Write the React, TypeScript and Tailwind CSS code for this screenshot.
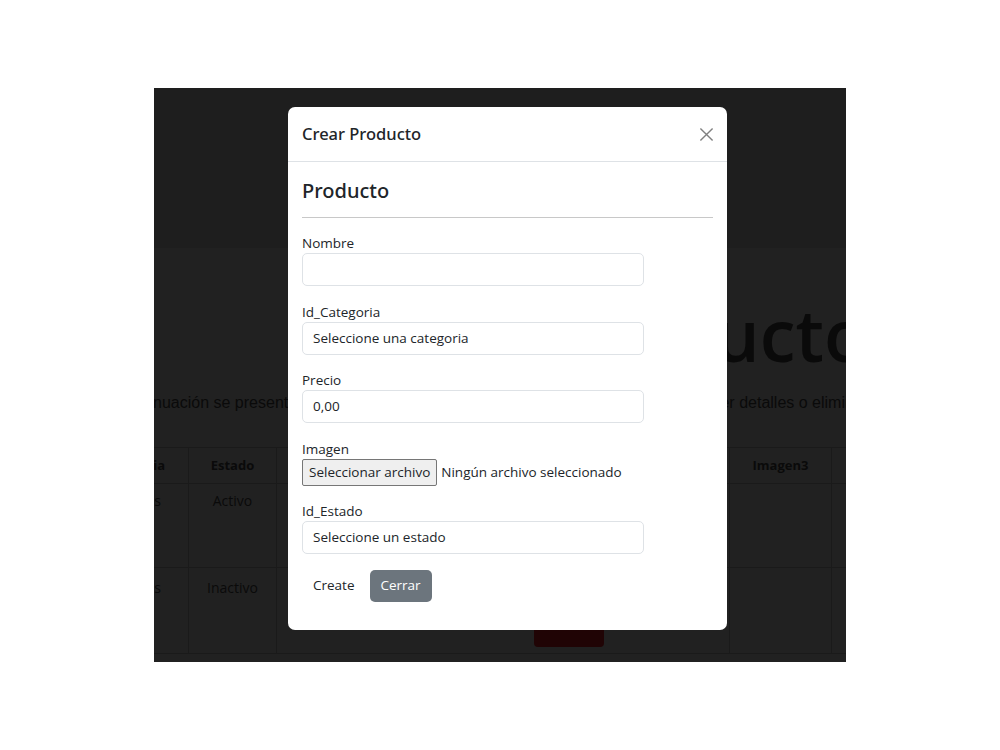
import React from 'react';

const FONT = "font-['Open_Sans',sans-serif]";
const TITLE = "font-['Noto_Sans','Open_Sans',sans-serif] font-medium";

const Field: React.FC<{ label: string; children: React.ReactNode }> = ({ label, children }) => (
    <div className="mb-[15.5px]">
        <label className="block text-[13.5px] leading-[20px] text-[#212529]">{label}</label>
        {children}
    </div>
);

const inputCls =
    'block w-[342px] h-[33px] px-[10px] rounded-[5px] border border-[#dee2e6] bg-white text-[13.5px] text-[#212529] outline-none';

const CreateModal: React.FC = () => (
    <div className={`absolute left-[134px] top-[19px] w-[439px] h-[523px] bg-white rounded-[7px] ${FONT}`}>
        <div className="h-[55px] flex items-center justify-between px-[14px] border-b border-[#dee2e6]">
            <h5 className={`text-[16.5px] text-[#212529] mt-[1px] ${TITLE}`}>Crear Producto</h5>
            <button className="w-[16px] h-[16px] mr-[-1px] flex items-center justify-center text-[#808080]">
                <svg width="15" height="15" viewBox="0 0 16 16" fill="none" stroke="currentColor" strokeWidth="1.5">
                    <path d="M1.5 1.5l13 13M14.5 1.5l-13 13" />
                </svg>
            </button>
        </div>
        <div className="px-[14px] pt-[15px]">
            <h3 className={`text-[20px] leading-[28px] text-[#212529] ${TITLE}`}>Producto</h3>
            <hr className="mt-[12px] mb-[15px] border-t border-[#c8c8c8]" />

            <Field label="Nombre">
                <input className={inputCls} />
            </Field>
            <Field label="Id_Categoria">
                <div className={`${inputCls} flex items-center`}>Seleccione una categoria</div>
            </Field>
            <Field label="Precio">
                <div className={`${inputCls} flex items-center`}>0,00</div>
            </Field>
            <Field label="Imagen">
                <div className="flex items-center h-[27px] text-[13.5px] text-[#212529]">
                    <span className="h-[27px] px-[6px] flex items-center bg-[#efefef] border border-[#767676] rounded-[2px]">
                        Seleccionar archivo
                    </span>
                    <span className="ml-[4px]">Ningún archivo seleccionado</span>
                </div>
            </Field>
            <Field label="Id_Estado">
                <div className={`${inputCls} flex items-center`}>Seleccione un estado</div>
            </Field>

            <div className="flex items-center gap-[4px]">
                <button className="h-[32px] px-[11px] text-[13.5px] text-[#212529]">Create</button>
                <button className="h-[32px] px-[11px] text-[13.5px] text-white bg-[#6c757d] rounded-[5px]">Cerrar</button>
            </div>
        </div>
    </div>
);

const line = 'border-[#1a1a1a]';
const dim = 'text-[#0a0a0a]';

const BackgroundPage: React.FC = () => (
    <div className={`h-full bg-[#212121] ${FONT}`}>
        <div className="h-[160px] bg-[#1e1e1e]" />
        <div className="pt-[50px] h-[122px] whitespace-nowrap">
            <span className={`block ml-[396px] text-[72px] leading-[72px] font-semibold ${dim}`}>Productos</span>
        </div>
        <div className="mt-[21px] h-[24px] flex items-center whitespace-nowrap font-['Liberation_Sans',sans-serif] text-[16px]">
            <span className={`ml-[-49px] w-[571px] shrink-0 ${dim}`}>A continuación se presentan los productos</span>
            <span className={`shrink-0 ${dim}`}>para ver detalles o eliminarlos.</span>
        </div>
        <div className="mt-[32px] ml-[-50px] w-[800px] text-[13px]">
            <div className={`flex h-[37px] items-center border-y ${line} font-bold`}>
                <div className={`w-[85px] h-full border-r ${line} flex items-center justify-end pr-[23px] ${dim}`}>Categoria</div>
                <div className={`w-[88px] h-full border-r ${line} flex items-center justify-center ${dim}`}>Estado</div>
                <div className={`w-[453px] h-full border-r ${line}`} />
                <div className={`w-[102px] h-full border-r ${line} flex items-center justify-center ${dim}`}>Imagen3</div>
            </div>
            <div className={`flex h-[84px] border-b ${line} text-[14px]`}>
                <div className={`w-[85px] border-r ${line} flex justify-end pr-[27px] pt-[6px] ${dim}`}>Accesorios</div>
                <div className={`w-[88px] border-r ${line} flex justify-center pt-[6px] ${dim}`}>Activo</div>
                <div className={`w-[453px] border-r ${line}`} />
                <div className={`w-[102px] border-r ${line}`} />
            </div>
            <div className={`flex h-[86px] border-b ${line} text-[14px]`}>
                <div className={`w-[85px] border-r ${line} flex justify-end pr-[27px] pt-[9px] ${dim}`}>Accesorios</div>
                <div className={`w-[88px] border-r ${line} flex justify-center pt-[9px] ${dim}`}>Inactivo</div>
                <div className={`w-[453px] border-r ${line} flex items-end pb-[6px]`}>
                    <div className="ml-[257px] w-[70px] h-[34px] rounded-[4px] bg-[#200405]" />
                </div>
                <div className={`w-[102px] border-r ${line}`} />
            </div>
        </div>
    </div>
);

export default function App() {
    return (
        <div className="w-[1000px] h-[750px] bg-white pt-[88px] pl-[154px]">
            <div className="relative w-[692px] h-[574px] overflow-hidden">
                <BackgroundPage />
                <CreateModal />
            </div>
        </div>
    );
}
